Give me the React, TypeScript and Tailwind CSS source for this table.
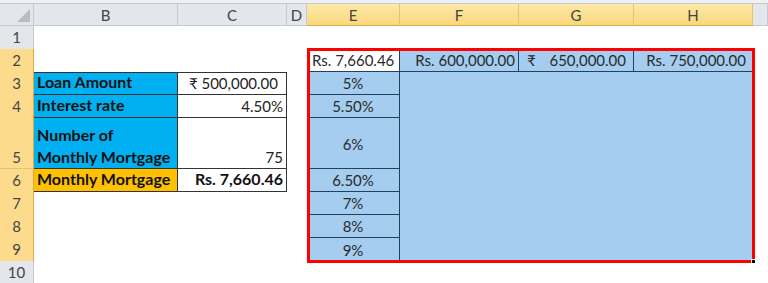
import React from "react"

const font = { fontFamily: "Lato, 'Open Sans', sans-serif" }

const columns = ["", "B", "C", "D", "E", "F", "G", "H", ""]
const selectedCols = ["E", "F", "G", "H"]
const rowCount = 10

function ColumnHeader({ label }: { label: string }) {
  const active = selectedCols.includes(label)
  return (
    <div
      className={
        active
          ? "flex items-center justify-center border-r border-b border-r-[#e6c272] border-b-[#e0a943] bg-gradient-to-b from-[#fde9a8] to-[#f9d77c] pt-[1px] text-[15px] text-[#444]"
          : "flex items-center justify-center border-r border-b border-[#c6cad0] bg-[#e3e6ea] pt-[1px] text-[15px] text-[#444]"
      }
    >
      {label}
    </div>
  )
}

function RowHeader({ n }: { n: number }) {
  const active = n >= 2 && n <= 9
  return (
    <div
      className={
        active
          ? "flex items-end justify-center border-r border-b border-r-[#e0a943] border-b-[#e6c272] bg-[#fcdc8c] text-[15px] text-[#444]"
          : "flex items-end justify-center border-r border-b border-[#c6cad0] bg-[#e3e6ea] text-[15px] text-[#444]"
      }
    >
      {n}
    </div>
  )
}

export default function App() {
  return (
    <div className="h-[283px] w-[768px] overflow-hidden bg-white" style={font}>
      <div className="h-[4px] border-b border-[#c6cad0] bg-[#eef0f3]" />
      <div className="grid grid-cols-[34px_144px_109px_20px_93px_119px_115px_119px_1fr] grid-rows-[22px_23px_23px_23px_23px_51px_23px_23px_23px_23px_23px]">
        {/* column headers */}
        <div className="relative border-r border-b border-[#c6cad0] bg-[#e3e6ea]">
          <svg className="absolute right-[3px] bottom-[3px]" width="13" height="13" viewBox="0 0 13 13">
            <polygon points="13,0 13,13 0,13" fill="#b9bdc3" />
          </svg>
        </div>
        {columns.slice(1).map((c, i) => (
          <ColumnHeader key={i} label={c} />
        ))}

        {/* row headers */}
        {Array.from({ length: rowCount }, (_, i) => (
          <div key={i} className="col-start-1 grid" style={{ gridRowStart: i + 2 }}>
            <RowHeader n={i + 1} />
          </div>
        ))}

        {/* inputs table */}
        <div className="col-start-2 row-start-4 flex items-end border-t border-r border-b border-[#333] bg-[#00b0f0] px-[3px] text-[16px] font-bold text-[#111]">
          Loan Amount
        </div>
        <div className="col-start-3 row-start-4 flex items-end justify-end border-t border-r border-b border-[#333] pr-[8px] text-[15px] text-[#222]">
          ₹ 500,000.00
        </div>
        <div className="col-start-2 row-start-5 flex items-end border-r border-b border-[#333] bg-[#00b0f0] px-[3px] text-[16px] font-bold text-[#111]">
          Interest rate
        </div>
        <div className="col-start-3 row-start-5 flex items-end justify-end border-r border-b border-[#333] px-[3px] text-[15px] text-[#222]">
          4.50%
        </div>
        <div className="col-start-2 row-start-6 flex items-end border-r border-b border-[#333] bg-[#00b0f0] px-[3px] text-[16px] leading-[22px] font-bold text-[#111]">
          Number of
          <br />
          Monthly Mortgage
        </div>
        <div className="col-start-3 row-start-6 flex items-end justify-end border-r border-b border-[#333] px-[3px] text-[15px] text-[#222]">
          75
        </div>
        <div className="col-start-2 row-start-7 flex items-end border-r border-b border-[#333] bg-[#ffc000] px-[3px] text-[16px] font-bold text-[#111]">
          Monthly Mortgage
        </div>
        <div className="col-start-3 row-start-7 flex items-end justify-end border-r border-b border-[#333] px-[3px] text-[16px] font-bold text-[#111]">
          Rs. 7,660.46
        </div>

        {/* data table, selected */}
        <div className="relative col-span-4 col-start-5 row-span-8 row-start-3 grid grid-cols-[93px_119px_115px_119px] grid-rows-[23px_23px_23px_51px_23px_23px_23px_23px] bg-[#a4cdef] text-[15px] text-[#2a2a2a]">
          <div className="flex items-end border-r border-b border-[#24405e] bg-white pl-[5px]">
            Rs. 7,660.46
          </div>
          <div className="flex items-end justify-end border-r border-b border-[#24405e] pr-[3px]">
            Rs. 600,000.00
          </div>
          <div className="flex items-end justify-between border-r border-b border-[#24405e] pr-[7px] pl-[8px]">
            <span>₹</span>
            <span>650,000.00</span>
          </div>
          <div className="flex items-end justify-end border-b border-[#24405e] pr-[7px]">
            Rs. 750,000.00
          </div>
          {["5%", "5.50%", "6%", "6.50%", "7%", "8%", "9%"].map((p, i) => (
            <div
              key={p}
              className={
                i === 2
                  ? "col-start-1 flex items-center justify-center border-r border-b border-[#24405e] pt-[2px]"
                  : i === 6
                    ? "col-start-1 flex items-end justify-center border-r border-[#24405e]"
                    : "col-start-1 flex items-end justify-center border-r border-b border-[#24405e]"
              }
            >
              {p}
            </div>
          ))}
          <div className="pointer-events-none absolute -top-[1px] -right-[2px] -bottom-[2px] left-0 border-[3px] border-[#ff0000]" />
          <div className="absolute -right-[3px] -bottom-[3px] h-[5px] w-[5px] border border-white bg-black" />
        </div>
      </div>
    </div>
  )
}
